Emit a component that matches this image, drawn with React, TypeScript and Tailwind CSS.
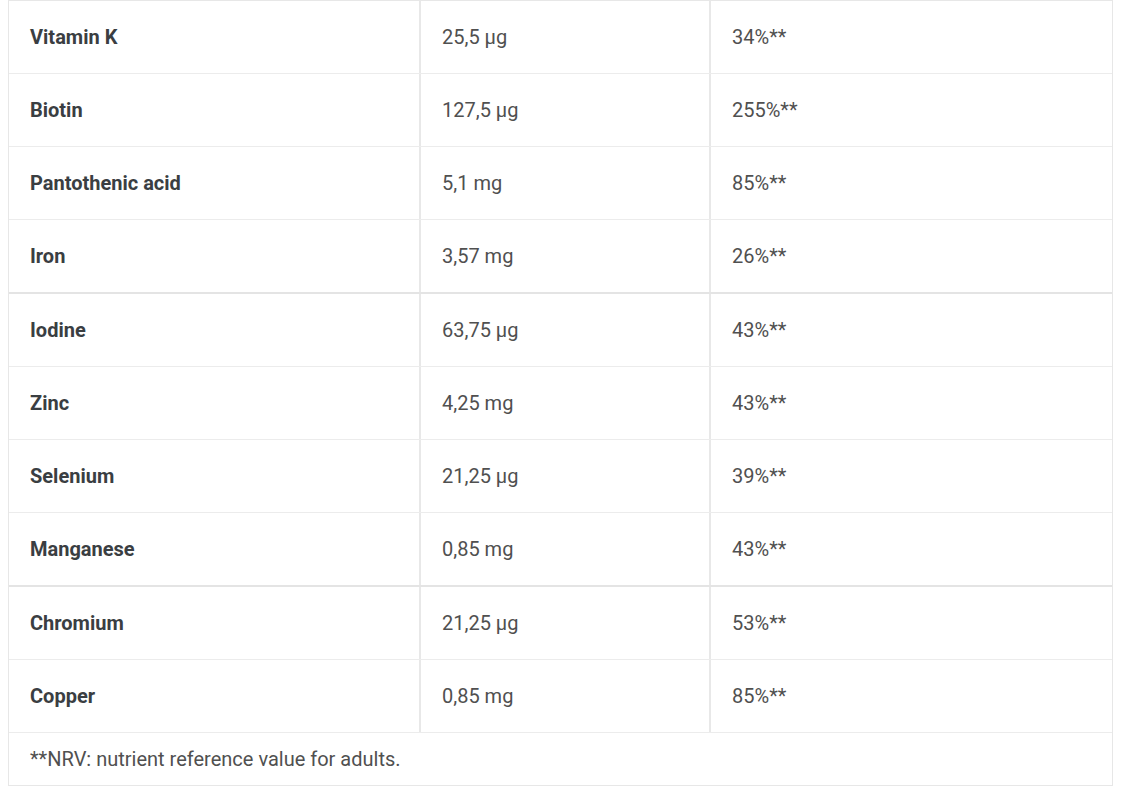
import React from "react";

const rows: [string, string, string][] = [
  ["Vitamin K", "25,5 µg", "34%**"],
  ["Biotin", "127,5 µg", "255%**"],
  ["Pantothenic acid", "5,1 mg", "85%**"],
  ["Iron", "3,57 mg", "26%**"],
  ["Iodine", "63,75 µg", "43%**"],
  ["Zinc", "4,25 mg", "43%**"],
  ["Selenium", "21,25 µg", "39%**"],
  ["Manganese", "0,85 mg", "43%**"],
  ["Chromium", "21,25 µg", "53%**"],
  ["Copper", "0,85 mg", "85%**"],
];

export default function App() {
  return (
    <div className="w-[1122px] h-[794px] bg-white" style={{ fontFamily: "Roboto, 'Liberation Sans', sans-serif" }}>
      <div className="ml-[8px] w-[1105px] border border-[#e7e7e7] text-[20px]">
        {rows.map(([name, amount, nrv], i) => {
          const thick = i === 3 || i === 7;
          return (
            <div
              key={name}
              className={
                thick
                  ? "grid grid-cols-[412px_290px_1fr] h-[74px] border-b-2 border-[#e4e4e4]"
                  : "grid grid-cols-[412px_290px_1fr] h-[73px] border-b border-[#ececec]"
              }
            >
              <div className="flex items-center pl-[21px] border-r-2 border-[#e8e8e8] font-bold text-[#3a3e42]">{name}</div>
              <div className="flex items-center pl-[21px] border-r-2 border-[#e8e8e8] text-[#505050]">{amount}</div>
              <div className="flex items-center pl-[21px] text-[#505050]">{nrv}</div>
            </div>
          );
        })}
        <div className="flex items-center h-[52px] pl-[21px] text-[#505050]">**NRV: nutrient reference value for adults.</div>
      </div>
    </div>
  );
}
